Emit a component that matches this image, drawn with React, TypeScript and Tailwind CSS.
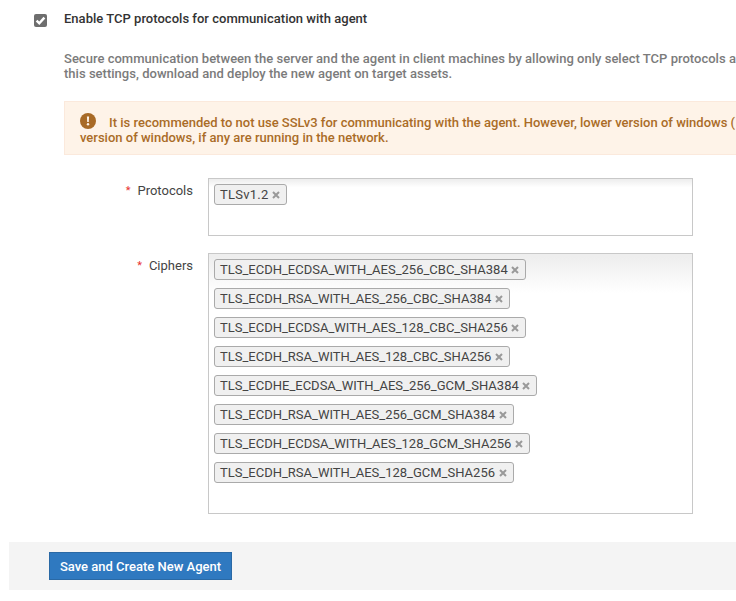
const ciphers = [
  "TLS_ECDH_ECDSA_WITH_AES_256_CBC_SHA384",
  "TLS_ECDH_RSA_WITH_AES_256_CBC_SHA384",
  "TLS_ECDH_ECDSA_WITH_AES_128_CBC_SHA256",
  "TLS_ECDH_RSA_WITH_AES_128_CBC_SHA256",
  "TLS_ECDHE_ECDSA_WITH_AES_256_GCM_SHA384",
  "TLS_ECDH_RSA_WITH_AES_256_GCM_SHA384",
  "TLS_ECDH_ECDSA_WITH_AES_128_GCM_SHA256",
  "TLS_ECDH_RSA_WITH_AES_128_GCM_SHA256",
];

function Tag({ label, labelClass }: { label: string; labelClass?: string }) {
  return (
    <div className="flex h-[21px] w-fit items-center gap-[3.5px] rounded-[3px] border border-[#aaaaaa] bg-[#f0f0f0] pl-[5px] pr-[6px] text-[13px] leading-none text-[#444444]">
      <span className={labelClass}>{label}</span>
      <svg width="8" height="8" viewBox="0 0 8 8" className="shrink-0">
        <path d="M1 1L7 7M7 1L1 7" stroke="#999999" strokeWidth="2" />
      </svg>
    </div>
  );
}

function Field({
  label,
  height,
  tags,
  labelClass,
}: {
  label: string;
  height: string;
  tags: string[];
  labelClass?: string;
}) {
  return (
    <div className="flex items-start">
      <div className="flex w-[193px] shrink-0 justify-end gap-[7px] pt-[5px] text-[13px] leading-[16px] text-[#444444]">
        <span className="text-[11px] text-[#e8312f]">*</span>
        <span>{label}</span>
      </div>
      <div
        className={`ml-[15px] flex w-[485px] flex-col gap-[8px] border border-[#c8c8c8] bg-gradient-to-b from-[#eeeeee] from-[1%] to-white to-[15%] px-[5px] pt-[5px] ${height}`}
      >
        {tags.map((t) => (
          <Tag key={t} label={t} labelClass={labelClass} />
        ))}
      </div>
    </div>
  );
}

export default function App() {
  return (
    <div className="h-[601px] w-[736px] overflow-hidden bg-white font-['Roboto',sans-serif] whitespace-nowrap">
      <div className="flex items-start pl-[34px] pt-[11px]">
        <div className="mt-[3px] flex h-[13px] w-[13px] items-center justify-center rounded-[2px] bg-[#6e6e6e]">
          <svg width="11" height="11" viewBox="0 0 11 11">
            <path d="M1.6 5.6L4.3 8.3L9.4 2.6" fill="none" stroke="white" strokeWidth="2.4" />
          </svg>
        </div>
        <span className="ml-[17px] text-[13px] leading-[15px] font-medium tracking-[0.02px] text-[#333333]">
          Enable TCP protocols for communication with agent
        </span>
      </div>

      <p className="ml-[64px] mt-[24px] text-[13px] leading-[15px] font-medium tracking-[0.02px] text-[#7b7b7b]">
        Secure communication between the server and the agent in client machines by allowing only select TCP protocols a
        <br />
        this settings, download and deploy the new agent on target assets.
      </p>

      <div className="ml-[64px] mt-[20px] h-[54px] w-[720px] border border-[#fbe9dc] bg-[#fef3e8] pl-[15px] pt-[13px] text-[13px] leading-[15px] font-medium text-[#aa6c27]">
        <div className="flex items-start">
          <svg width="16" height="16" viewBox="0 0 16 16" className="-mt-[2px] mr-[13px] shrink-0">
            <circle cx="8" cy="8" r="8" fill="#a86a26" />
            <path d="M6.9 3.4h2.2l-.3 5.6H7.2z" fill="#fef3e8" />
            <circle cx="8" cy="11.3" r="1.2" fill="#fef3e8" />
          </svg>
          <span>It is recommended to not use SSLv3 for communicating with the agent. However, lower version of windows (</span>
        </div>
        <div>version of windows, if any are running in the network.</div>
      </div>

      <div className="mt-[23px] flex flex-col gap-[17px]">
        <Field label="Protocols" height="h-[58px]" tags={["TLSv1.2"]} labelClass="tracking-[0.25px]" />
        <Field label="Ciphers" height="h-[261px]" tags={ciphers} />
      </div>

      <div className="ml-[9px] mt-[28px] h-[48px] bg-[#f4f4f4] pl-[40px] pt-[10px]">
        <button className="h-[28px] w-[183px] border border-[#2a69a5] bg-[#2f79c0] pt-[1px] text-[13px] font-medium text-white">
          Save and Create New Agent
        </button>
      </div>
    </div>
  );
}
